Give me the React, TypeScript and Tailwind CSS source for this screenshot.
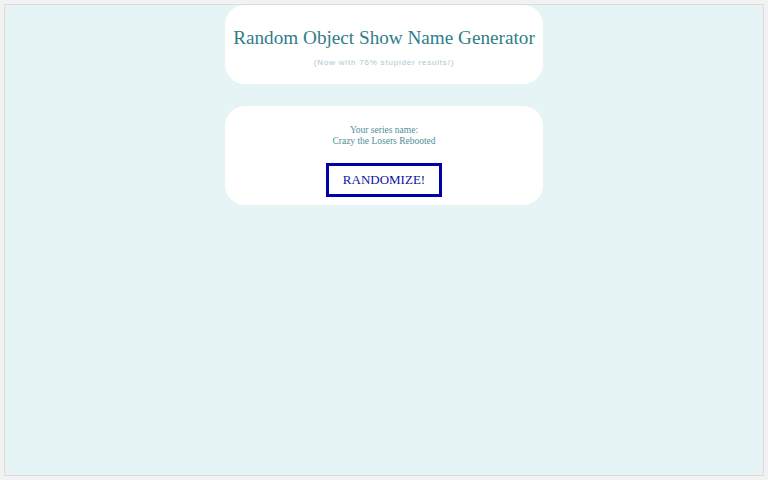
export default function App() {
  return (
    <div className="h-[480px] w-[768px] bg-[#f2f2f2] p-[4px]">
      <div className="flex h-[472px] flex-col items-center border border-[#dcdcdc] bg-[#e6f4f5]">
        <header className="flex h-[79px] w-[318px] flex-col items-center rounded-[20px] bg-white pt-[22px]">
          <h1 className="font-['Liberation_Serif',serif] text-[19.2px] leading-[22px] text-[#2f7d88]">
            Random Object Show Name Generator
          </h1>
          <p className="mt-[9px] font-['Liberation_Sans',sans-serif] text-[8px] leading-[10px] tracking-[0.8px] text-[#aac7ce]">
            (Now with 76% stupider results!)
          </p>
        </header>

        <section className="mt-[22px] flex h-[99px] w-[318px] flex-col items-center rounded-[20px] bg-white pt-[19px]">
          <div className="text-center font-['Liberation_Serif',serif] text-[9.5px] leading-[11px] text-[#4f8f99]">
            <p>Your series name:</p>
            <p>Crazy the Losers Rebooted</p>
          </div>
          <button
            type="button"
            className="mt-[16px] h-[34px] w-[116px] border-[3px] border-[#0000a8] bg-white font-['Liberation_Serif',serif] text-[13px] text-[#1010a0]"
          >
            RANDOMIZE!
          </button>
        </section>
      </div>
    </div>
  );
}
